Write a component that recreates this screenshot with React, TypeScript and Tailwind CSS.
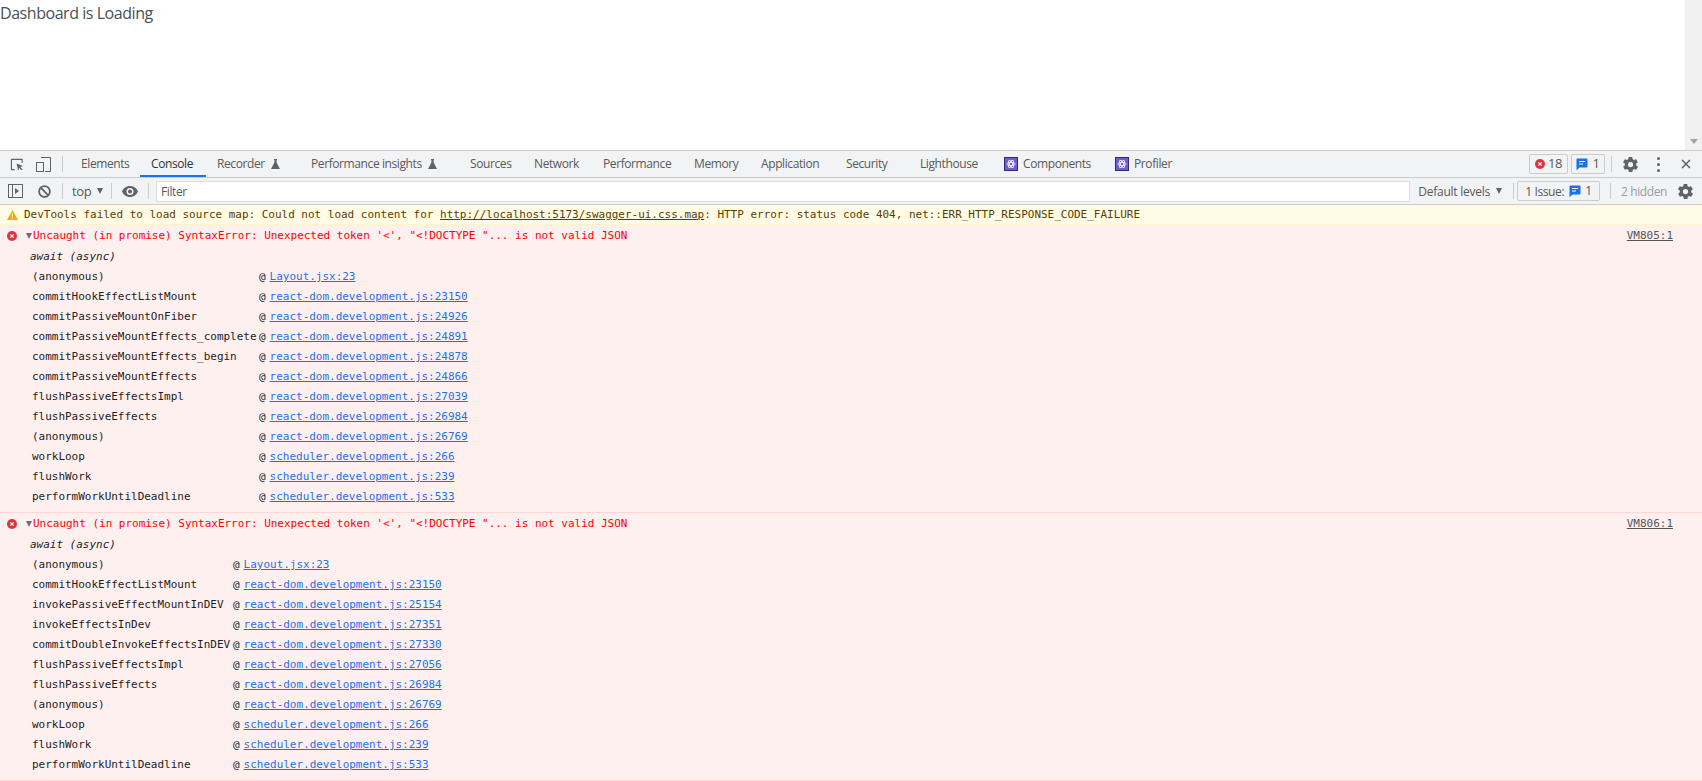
const SANS = "font-['Open_Sans',sans-serif]";

const frames1 = [
  ["(anonymous)", "Layout.jsx:23"],
  ["commitHookEffectListMount", "react-dom.development.js:23150"],
  ["commitPassiveMountOnFiber", "react-dom.development.js:24926"],
  ["commitPassiveMountEffects_complete", "react-dom.development.js:24891"],
  ["commitPassiveMountEffects_begin", "react-dom.development.js:24878"],
  ["commitPassiveMountEffects", "react-dom.development.js:24866"],
  ["flushPassiveEffectsImpl", "react-dom.development.js:27039"],
  ["flushPassiveEffects", "react-dom.development.js:26984"],
  ["(anonymous)", "react-dom.development.js:26769"],
  ["workLoop", "scheduler.development.js:266"],
  ["flushWork", "scheduler.development.js:239"],
  ["performWorkUntilDeadline", "scheduler.development.js:533"],
];

const frames2 = [
  ["(anonymous)", "Layout.jsx:23"],
  ["commitHookEffectListMount", "react-dom.development.js:23150"],
  ["invokePassiveEffectMountInDEV", "react-dom.development.js:25154"],
  ["invokeEffectsInDev", "react-dom.development.js:27351"],
  ["commitDoubleInvokeEffectsInDEV", "react-dom.development.js:27330"],
  ["flushPassiveEffectsImpl", "react-dom.development.js:27056"],
  ["flushPassiveEffects", "react-dom.development.js:26984"],
  ["(anonymous)", "react-dom.development.js:26769"],
  ["workLoop", "scheduler.development.js:266"],
  ["flushWork", "scheduler.development.js:239"],
  ["performWorkUntilDeadline", "scheduler.development.js:533"],
];

const tabs = [
  { name: "Elements", w: "w-[70px]" },
  { name: "Console", w: "w-[66px]", active: true },
  { name: "Recorder", w: "w-[94px]", flask: true },
  { name: "Performance insights", w: "w-[159px]", flask: true },
  { name: "Sources", w: "w-[64px]" },
  { name: "Network", w: "w-[69px]" },
  { name: "Performance", w: "w-[91px]" },
  { name: "Memory", w: "w-[67px]" },
  { name: "Application", w: "w-[85px]" },
  { name: "Security", w: "w-[74px]" },
  { name: "Lighthouse", w: "w-[84px]" },
  { name: "Components", w: "w-[111px]", react: true },
  { name: "Profiler", w: "w-[100px]", react: true },
];

function Flask() {
  return (
    <svg width="9" height="10" viewBox="0 0 9 10" className="ml-[6px] shrink-0">
      <path d="M3 0h3v1h-.4v2.6L9 10H0l3.400-6.400V1H3z" fill="#5f6368" />
    </svg>
  );
}

function ReactIcon() {
  return (
    <svg width="14" height="14" viewBox="0 0 14 14" className="mr-[5px] shrink-0">
      <rect x="0.500" y="0.500" width="13" height="13" fill="#6f5bd6" stroke="#33276e" />
      <g fill="none" stroke="#fff" strokeWidth="0.800">
        <ellipse cx="7" cy="7" rx="4.200" ry="1.700" />
        <ellipse cx="7" cy="7" rx="4.200" ry="1.700" transform="rotate(60 7 7)" />
        <ellipse cx="7" cy="7" rx="4.200" ry="1.700" transform="rotate(120 7 7)" />
      </g>
    </svg>
  );
}

function Gear({ color = "#5f6368" }: { color?: string }) {
  return (
    <svg width="15" height="15" viewBox="2 2 20 20" className="block">
      <path
        fill={color}
        d="M19.400 13c.1-.3.1-.7.1-1s0-.7-.1-1l2.100-1.600c.2-.2.2-.4.1-.6l-2-3.500c-.1-.2-.4-.3-.6-.2l-2.500 1c-.5-.4-1.100-.7-1.700-1l-.4-2.600c0-.3-.2-.4-.5-.4h-4c-.3 0-.5.1-.5.4l-.4 2.600c-.6.3-1.200.6-1.700 1l-2.500-1c-.2-.1-.5 0-.6.2l-2 3.500c-.1.2-.1.4.1.6L4.600 11c-.1.3-.1.700-.1 1s0 .7.1 1l-2.100 1.600c-.2.2-.2.4-.1.6l2 3.500c.1.2.4.3.6.2l2.500-1c.5.4 1.100.7 1.700 1l.4 2.600c0 .3.2.4.5.4h4c.3 0 .5-.1.5-.4l.4-2.600c.6-.3 1.200-.6 1.700-1l2.500 1c.2.1.5 0 .6-.2l2-3.500c.1-.2.1-.4-.1-.6zM12 15.500a3.500 3.500 0 1 1 0-7 3.500 3.500 0 0 1 0 7z"
      />
    </svg>
  );
}

function MessageIcon() {
  return (
    <svg width="12" height="13" viewBox="0 0 12 13" className="shrink-0">
      <path d="M0.500 1.500a1 1 0 0 1 1-1h9a1 1 0 0 1 1 1v7a1 1 0 0 1-1 1H3.500l-3 2.800z" fill="#1a73e8" />
      <path d="M3 3.500h6M3 6h4" stroke="#fff" strokeWidth="1.200" />
    </svg>
  );
}

function ErrorIcon({ size = 10 }: { size?: number }) {
  return (
    <svg width={size} height={size} viewBox="0 0 10 10" className="shrink-0">
      <circle cx="5" cy="5" r="5" fill="#e0323f" />
      <path d="M3.300 3.300l3.400 3.400M6.700 3.300l-3.400 3.400" stroke="#fff" strokeWidth="1.200" />
    </svg>
  );
}

function Separator({ className = "" }: { className?: string }) {
  return <div className={`w-px h-[16px] bg-[#ccc] shrink-0 ${className}`} />;
}

function TabBar() {
  return (
    <div className="h-[28px] flex items-stretch bg-[#f1f3f4] border-t border-b border-[#ccc] text-[12px] text-[#5a5a5a] shrink-0">
      <div className="flex items-center pl-[10px] w-[70px] shrink-0">
        <svg width="14" height="13" viewBox="0 0 15 14" fill="none">
          <path d="M5 12.500H1.500V1.500H13V5" stroke="#5f6368" strokeWidth="1.200" />
          <path d="M7 6l7 2.500-3 1.200 2.500 2.500-1 1-2.500-2.500-1.200 3z" fill="#5f6368" />
        </svg>
        <svg width="15" height="16" viewBox="0 0 15 16" fill="none" className="ml-[12px]">
          <path d="M5 1.500h9.500v14H9" stroke="#5f6368" strokeWidth="1" />
          <rect x="0.500" y="6.500" width="7" height="9" stroke="#5f6368" />
        </svg>
        <Separator className="ml-[11px]" />
      </div>
      {tabs.map((t) => (
        <div
          key={t.name}
          className={`${t.w} shrink-0 flex items-center pl-[11px] pt-[2px] border-b-2 ${t.active ? "border-[#1a73e8] text-[#333]" : "border-transparent"}`}
        >
          {t.react && <ReactIcon />}
          <span>{t.name}</span>
          {t.flask && <Flask />}
        </div>
      ))}
      <div className="flex-1" />
      <div className="flex items-center shrink-0">
        <div className="h-[20px] w-[39px] flex items-center justify-center gap-[3px] border border-[#ccc] rounded-[2px] text-[13px]">
          <ErrorIcon />
          <span>18</span>
        </div>
        <div className="h-[20px] w-[34px] ml-[3px] flex items-center justify-center gap-[4px] border border-[#ccc] rounded-[2px] text-[13px]">
          <MessageIcon />
          <span>1</span>
        </div>
        <Separator className="ml-[6px]" />
        <div className="ml-[11px]"><Gear /></div>
        <div className="ml-[19px] flex flex-col gap-[3px]">
          <div className="w-[3px] h-[3px] rounded-full bg-[#5f6368]" />
          <div className="w-[3px] h-[3px] rounded-full bg-[#5f6368]" />
          <div className="w-[3px] h-[3px] rounded-full bg-[#5f6368]" />
        </div>
        <svg width="10" height="10" viewBox="0 0 10 10" className="ml-[21px] mr-[11px]">
          <path d="M1 1l8 8M9 1l-8 8" stroke="#5f6368" strokeWidth="1.500" />
        </svg>
      </div>
    </div>
  );
}

function ConsoleToolbar() {
  return (
    <div className="h-[27px] flex items-center bg-[#f1f3f4] border-b border-[#ccc] text-[12px] text-[#5a5a5a] shrink-0">
      <svg width="15" height="14" viewBox="0 0 15 14" fill="none" className="ml-[8px]">
        <rect x="0.500" y="0.500" width="14" height="13" stroke="#5f6368" />
        <path d="M4.500 0.500v13" stroke="#5f6368" />
        <path d="M7 4l4 3-4 3z" fill="#5f6368" />
      </svg>
      <svg width="13" height="13" viewBox="0 0 13 13" fill="none" className="ml-[15px]">
        <circle cx="6.500" cy="6.500" r="5.400" stroke="#5f6368" strokeWidth="1.800" />
        <path d="M2.700 2.700l7.600 7.600" stroke="#5f6368" strokeWidth="1.800" />
      </svg>
      <Separator className="ml-[11px]" />
      <span className="ml-[9px] w-[18px] text-[13px] pt-[1px]">top</span>
      <span className="ml-[7px] w-0 h-0 border-x-[3.500px] border-x-transparent border-t-[6px] border-t-[#5f6368]" />
      <Separator className="ml-[8px]" />
      <svg width="16" height="11" viewBox="0 0 16 11" className="ml-[10px]">
        <path
          fillRule="evenodd"
          fill="#5f6368"
          d="M8 0c3.600 0 6.600 2.200 8 5.500C14.600 8.800 11.600 11 8 11S1.400 8.800 0 5.500C1.400 2.200 4.400 0 8 0zm0 2a3.500 3.500 0 1 0 0 7 3.500 3.500 0 0 0 0-7zm0 1.500a2 2 0 1 1 0 4 2 2 0 0 1 0-4z"
        />
      </svg>
      <Separator className="ml-[10px]" />
      <div className="ml-[7px] flex-1 h-[21px] bg-white border border-[#ddd] flex items-center pl-[4px] pt-[2px] text-[#5a5a5a]">
        Filter
      </div>
      <span className="ml-[8px] shrink-0 pt-[2px] tracking-[-0.25px]">Default levels</span>
      <span className="ml-[6px] w-0 h-0 border-x-[3.500px] border-x-transparent border-t-[6px] border-t-[#5f6368] shrink-0" />
      <Separator className="ml-[11px]" />
      <div className="ml-[3px] h-[20px] w-[83px] shrink-0 flex items-center justify-center gap-[5px] border border-[#ccc] rounded-[2px]">
        <span className="pt-[1px]">1 Issue:</span>
        <span className="flex items-center gap-[4px]">
          <MessageIcon />1
        </span>
      </div>
      <Separator className="ml-[10px]" />
      <span className="ml-[10px] pt-[2px] text-[#9aa0a6] w-[48px] shrink-0">2 hidden</span>
      <div className="ml-[9px] mr-[9px] shrink-0"><Gear /></div>
    </div>
  );
}

function StackRow({ fn, link, col }: { fn: string; link: string; col: string }) {
  return (
    <div className="h-[20px] flex items-center pl-[32px] pt-[1px] text-[#222]">
      <span className={`${col} shrink-0 whitespace-pre`}>{fn}</span>
      <span className="mr-[4px]">@</span>
      <span className="text-[#1a73e8] underline">{link}</span>
    </div>
  );
}

function ErrorBlock({ vm, frames, col }: { vm: string; frames: string[][]; col: string }) {
  return (
    <div className="bg-[#fff0f0] border-b border-[#ffd6d6] pb-[5px]">
      <div className="h-[22px] flex items-center pl-[7px] pr-[29px]">
        <ErrorIcon />
        <span className="ml-[9px] w-0 h-0 border-x-[3.500px] border-x-transparent border-t-[6px] border-t-[#6e6e6e]" />
        <span className="ml-[1px] pt-[1px] text-[#f00]">
          Uncaught (in promise) SyntaxError: Unexpected token '&lt;', "&lt;!DOCTYPE "... is not valid JSON
        </span>
        <span className="ml-auto pt-[1px] text-[#545454] underline">{vm}</span>
      </div>
      <div className="h-[20px] flex items-center pl-[30px] pt-[1px] italic text-[#222]">await (async)</div>
      {frames.map((f, i) => (
        <StackRow key={i} fn={f[0]} link={f[1]} col={col} />
      ))}
    </div>
  );
}

export default function App() {
  return (
    <div className="w-[1702px] h-[781px] overflow-hidden bg-white flex flex-col">
      <div className="h-[150px] shrink-0 flex">
        <div className={`flex-1 text-[16px] leading-[26px] tracking-[-0.45px] text-[#495057] ${SANS}`}>Dashboard is Loading</div>
        <div className="w-[17px] bg-[#f1f1f1] flex flex-col justify-end items-center pb-[6px]">
          <span className="w-0 h-0 border-x-[4px] border-x-transparent border-t-[5px] border-t-[#a3a3a3]" />
        </div>
      </div>
      <div className={`flex flex-col shrink-0 tracking-[-0.4px] ${SANS}`}>
        <TabBar />
        <ConsoleToolbar />
      </div>
      <div className="flex-1 text-[10.98px] font-['DejaVu_Sans_Mono',monospace]">
        <div className="h-[20px] flex items-center bg-[#fffbe5] border-b border-[#fff5c2] pl-[7px] text-[#5c3c00]">
          <svg width="11" height="10" viewBox="0 0 11 10" className="shrink-0">
            <path d="M5.500 0L11 10H0z" fill="#f9ab00" />
            <path d="M5.500 3.500v3.200M5.500 7.500v1.200" stroke="#fff" strokeWidth="1" />
          </svg>
          <span className="ml-[6px] pt-[2px]">
            DevTools failed to load source map: Could not load content for{" "}
            <span className="underline">http://localhost:5173/swagger-ui.css.map</span>: HTTP error: status code 404, net::ERR_HTTP_RESPONSE_CODE_FAILURE
          </span>
        </div>
        <ErrorBlock vm="VM805:1" frames={frames1} col="w-[227px]" />
        <ErrorBlock vm="VM806:1" frames={frames2} col="w-[201px]" />
      </div>
    </div>
  );
}
